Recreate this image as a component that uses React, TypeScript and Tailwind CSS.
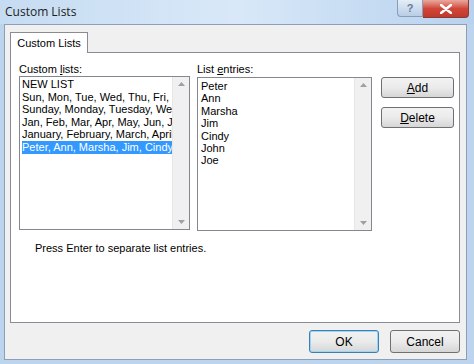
import React from "react"

const customLists = [
  "NEW LIST",
  "Sun, Mon, Tue, Wed, Thu, Fri, Sat",
  "Sunday, Monday, Tuesday, Wednesday",
  "Jan, Feb, Mar, Apr, May, Jun, Jul",
  "January, February, March, April",
  "Peter, Ann, Marsha, Jim, Cindy, John, Joe",
]

const entries = ["Peter", "Ann", "Marsha", "Jim", "Cindy", "John", "Joe"]

function Scrollbar() {
  return (
    <div className="w-[17px] h-full bg-[#f0f0f0] border-l border-[#e6e6e6] flex flex-col justify-between items-center py-[5px]">
      <svg width="7" height="4" viewBox="0 0 7 4">
        <path d="M0 4 L3.5 0 L7 4 Z" fill="#a0a0a0" />
      </svg>
      <svg width="7" height="4" viewBox="0 0 7 4">
        <path d="M0 0 L3.5 4 L7 0 Z" fill="#a0a0a0" />
      </svg>
    </div>
  )
}

function Button({ children, className = "" }: { children: React.ReactNode; className?: string }) {
  return (
    <div
      className={`flex items-center justify-center rounded-[3px] border border-[#707070] bg-gradient-to-b from-[#f2f2f2] via-[#ebebeb] to-[#d6d6d6] text-[12px] text-black ${className}`}
    >
      {children}
    </div>
  )
}

export default function App() {
  return (
    <div
      className="w-[474px] h-[364px] flex flex-col bg-[#bcd4ee] overflow-hidden text-black"
      style={{ fontFamily: '"Liberation Sans", Arial, sans-serif' }}
    >
      {/* title bar */}
      <div className="h-[24px] flex items-start bg-gradient-to-r from-[#c6dcf2] via-[#d8e8f8] to-[#b8d2ee] relative">
        <div className="pl-[5px] pt-[4px] text-[12px] leading-[16px] text-[#1e1e1e]" style={{ fontFamily: '"Open Sans", sans-serif' }}>
          Custom Lists
        </div>
        <div className="ml-auto flex mr-[5px]">
          <div className="w-[26px] h-[17px] rounded-bl-[4px] border border-[#8a9db8] border-t-0 bg-gradient-to-b from-[#e4edf7] to-[#b9cde6] flex items-center justify-center text-[11px] text-[#6a7c95] font-bold">
            ?
          </div>
          <div className="w-[46px] h-[18px] rounded-br-[4px] border border-[#8a3a32] border-t-0 border-l-0 bg-gradient-to-b from-[#e8a89e] via-[#d0473a] to-[#c0392b] flex items-center justify-center">
            <svg width="12" height="10" viewBox="0 0 12 10">
              <path d="M1 1 L11 9 M11 1 L1 9" stroke="#fff" strokeWidth="2.6" strokeLinecap="round" />
            </svg>
          </div>
        </div>
      </div>

      {/* client area */}
      <div className="ml-[4px] mr-[7px] mb-[4px] flex-1 bg-[#f0f0f0] border border-[#8c9fb7] flex flex-col px-[5px] pt-[7px]">
        {/* tab header */}
        <div className="flex">
          <div className="w-[78px] h-[21px] bg-white border border-[#898c95] border-b-0 text-[11px] flex items-center justify-center -mb-px relative z-10">
            Custom Lists
          </div>
        </div>

        {/* tab panel */}
        <div className="mr-[1px] h-[271px] bg-white border border-[#898c95] flex flex-col pl-[8px] pt-[9px] text-[11px]">
          <div className="flex">
            {/* custom lists */}
            <div className="w-[171px] flex flex-col">
              <div className="leading-[14px] h-[14px]">
                Custom <span className="underline">l</span>ists:
              </div>
              <div className="h-[154px] border border-[#828790] flex">
                <div className="flex-1 overflow-hidden pt-px pl-[2px]">
                  {customLists.map((l, i) => (
                    <div
                      key={i}
                      className={`whitespace-nowrap leading-[12.6px] h-[12.6px] ${
                        i === 5 ? "bg-[#3399ff] text-white" : ""
                      }`}
                    >
                      {l}
                    </div>
                  ))}
                </div>
                <Scrollbar />
              </div>
            </div>

            {/* entries */}
            <div className="ml-[7px] w-[175px] flex flex-col">
              <div className="leading-[14px] h-[14px]">
                List <span className="underline">e</span>ntries:
              </div>
              <div className="mt-px h-[154px] border border-[#828790] flex">
                <div className="flex-1 overflow-hidden pt-[2px] pl-[3px]">
                  {entries.map((e) => (
                    <div key={e} className="whitespace-nowrap leading-[12.4px] h-[12.4px]">
                      {e}
                    </div>
                  ))}
                </div>
                <Scrollbar />
              </div>
            </div>

            {/* side buttons */}
            <div className="ml-[9px] pt-[15px] flex flex-col gap-[9px]">
              <Button className="w-[73px] h-[21px]">
                <span className="underline">A</span>dd
              </Button>
              <Button className="w-[73px] h-[21px]">
                <span className="underline">D</span>elete
              </Button>
            </div>
          </div>

          <div className="mt-[10px] pl-[16px] leading-[14px]">Press Enter to separate list entries.</div>
        </div>

        {/* footer */}
        <div className="flex justify-end gap-[11px] mt-[7px] mr-[1px]">
          <Button className="w-[70px] h-[23px] !border-[#3c7fb1] shadow-[inset_0_0_0_1px_#9ad6f5]">OK</Button>
          <Button className="w-[70px] h-[23px]">Cancel</Button>
        </div>
      </div>
    </div>
  )
}
